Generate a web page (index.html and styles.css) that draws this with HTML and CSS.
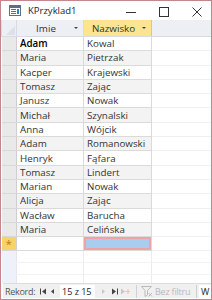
FILE: index.html
```html
<!DOCTYPE html>
<html lang="pl">
<head>
    <meta charset="UTF-8">
    <title>KPrzyklad1</title>
    <link rel="stylesheet" href="styles.css">
</head>
<body>
    <div class="window">
        <div class="title-bar">
            <svg class="app-icon" width="12" height="11" viewBox="0 0 12 11">
                <rect x="0.5" y="0.5" width="11" height="10" fill="#fff" stroke="#5a6f8a"/>
                <rect x="1" y="1" width="10" height="2" fill="#5a6f8a"/>
                <rect x="2" y="4" width="5" height="1" fill="#5a6f8a"/>
                <rect x="2" y="6" width="5" height="1" fill="#5a6f8a"/>
                <rect x="2" y="8" width="5" height="1" fill="#5a6f8a"/>
                <rect x="8" y="4" width="2" height="5" fill="#2f7fd0"/>
            </svg>
            <span class="title">KPrzyklad1</span>
            <div class="win-buttons">
                <span class="win-btn">
                    <svg width="10" height="10" viewBox="0 0 10 10"><line x1="0" y1="5.5" x2="10" y2="5.5" stroke="#333"/></svg>
                </span>
                <span class="win-btn">
                    <svg width="10" height="10" viewBox="0 0 10 10"><rect x="0.5" y="0.5" width="9" height="9" fill="none" stroke="#333"/></svg>
                </span>
                <span class="win-btn">
                    <svg width="10" height="10" viewBox="0 0 10 10"><path d="M0.5 0.5 L9.5 9.5 M9.5 0.5 L0.5 9.5" stroke="#333"/></svg>
                </span>
            </div>
        </div>

        <div class="sheet">
            <table class="grid">
                <colgroup>
                    <col class="c-sel">
                    <col class="c-imie">
                    <col class="c-nazw">
                    <col>
                </colgroup>
                <thead>
                    <tr>
                        <th class="corner">
                            <svg width="9" height="9" viewBox="0 0 9 9"><path d="M9 0 L9 9 L0 9 Z" fill="#dde0e8"/></svg>
                        </th>
                        <th><span>Imie</span><i class="drop"></i></th>
                        <th class="active"><span>Nazwisko</span><i class="drop"></i></th>
                        <th class="blank"></th>
                    </tr>
                </thead>
                <tbody id="rows"></tbody>
            </table>
        </div>

        <div class="nav-bar">
            <span class="lbl">Rekord:</span>
            <span class="nav-ico first">
                <svg width="7" height="7" viewBox="0 0 7 7"><rect x="0" y="0.5" width="1" height="6" fill="#444"/><path d="M6 0.5 L2 3.5 L6 6.5 Z" fill="#444"/></svg>
            </span>
            <span class="nav-ico">
                <svg width="7" height="7" viewBox="0 0 7 7"><path d="M5 1 L2 3.5 L5 6 Z" fill="#444"/></svg>
            </span>
            <span class="rec-box">15 z 15</span>
            <span class="nav-ico next">
                <svg width="7" height="7" viewBox="0 0 7 7"><path d="M2 1 L5 3.5 L2 6 Z" fill="#c8c8c8"/></svg>
            </span>
            <span class="nav-ico">
                <svg width="7" height="7" viewBox="0 0 7 7"><path d="M1 0.5 L5 3.5 L1 6.5 Z" fill="#444"/><rect x="6" y="0.5" width="1" height="6" fill="#444"/></svg>
            </span>
            <span class="nav-ico wide">
                <svg width="9" height="7" viewBox="0 0 9 7"><path d="M0 0.5 L4 3.5 L0 6.5 Z" fill="#c8c8c8"/><path d="M7 1 L7 6 M4.5 3.5 L9 3.5" stroke="#f2cf7a" stroke-width="1.2"/></svg>
            </span>
            <span class="sep"></span>
            <span class="filter">
                <svg width="12" height="11" viewBox="0 0 12 11"><path d="M0.5 0.5 L10.5 0.5 L6.5 4.5 L6.5 9 L4 10.5 L4 4.5 Z" fill="none" stroke="#bbb"/><path d="M7.5 7 L11 10.5 M11 7 L7.5 10.5" stroke="#bbb"/></svg>
                <span class="filter-txt">Bez filtru</span>
            </span>
            <span class="sep last"></span>
            <span class="search-box">W</span>
        </div>
    </div>

    <script>
// dane tabeli
const people = [
    ['Adam', 'Kowal'],
    ['Maria', 'Pietrzak'],
    ['Kacper', 'Krajewski'],
    ['Tomasz', 'Zając'],
    ['Janusz', 'Nowak'],
    ['Michał', 'Szynalski'],
    ['Anna', 'Wójcik'],
    ['Adam', 'Romanowski'],
    ['Henryk', 'Fąfara'],
    ['Tomasz', 'Lindert'],
    ['Marian', 'Nowak'],
    ['Alicja', 'Zając'],
    ['Wacław', 'Barucha'],
    ['Maria', 'Celińska']
];

const tbody = document.getElementById('rows');
let html = '';
people.forEach((p, i) => {
    const cls = i === 0 ? 'first' : (i % 2 ? 'alt' : '');
    html += '<tr class="' + cls + '"><td class="sel"></td><td>' + p[0] + '</td><td>' + p[1] + '</td><td class="blank"></td></tr>';
});
// nowy rekord
html += '<tr class="new-row"><td class="sel star">*</td><td></td><td class="focus"></td><td class="blank"></td></tr>';
// puste miejsce pod tabelą
for (let i = 0; i < 3; i++) {
    html += '<tr class="empty"><td class="sel"></td><td></td><td></td><td class="blank"></td></tr>';
}
tbody.innerHTML = html;
    </script>
</body>
</html>
```

FILE: styles.css
```css
body {
    margin: 0;
    padding: 0;
    font-family: "Open Sans", "Noto Sans", sans-serif;
    background: #fff;
}
.window {
    width: 212px;
    height: 300px;
    box-sizing: border-box;
    border: 1px solid #c5858b;
    display: flex;
    flex-direction: column;
    overflow: hidden;
}
.title-bar {
    height: 19px;
    display: flex;
    align-items: center;
    padding-left: 8px;
    flex-shrink: 0;
}
.app-icon {
    margin-right: 7px;
}
.title {
    font-size: 9.5px;
    color: #222;
}
.win-buttons {
    margin-left: auto;
    display: flex;
    margin-top: 2px;
    margin-right: -2px;
}
.win-btn {
    width: 33px;
    display: flex;
    justify-content: center;
}

/* arkusz danych */
.sheet {
    flex: 1;
    overflow: hidden;
}
.grid {
    border-collapse: collapse;
    table-layout: fixed;
    width: 210px;
    font-size: 9.8px;
    color: #333;
}
.c-sel { width: 15px; }
.c-imie { width: 67px; }
.c-nazw { width: 68px; }
.grid th {
    height: 16px;
    padding: 0;
    background: #edeff5;
    border: 1px solid #d8dbe3;
    border-top: none;
    font-weight: normal;
    color: #333;
    position: relative;
    font-size: 9.8px;
}
.grid th span {
    display: block;
    text-align: center;
    padding-right: 8px;
}
.grid th.active {
    background: #fce490;
    border-right-color: #e8c95c;
}
.grid th.corner {
    text-align: right;
    vertical-align: bottom;
    line-height: 0;
}
.grid th.corner svg {
    margin: 0 1px 1px 0;
}
.grid th.blank {
    border-right: none;
}
.drop {
    position: absolute;
    right: 5px;
    top: 7px;
    width: 0;
    height: 0;
    border-left: 2px solid transparent;
    border-right: 2px solid transparent;
    border-top: 2px solid #444;
}
.grid td {
    height: 13.3px;
    padding: 0 0 0 3px;
    border: 1px solid #dadada;
    border-left: none;
    white-space: nowrap;
    overflow: hidden;
    line-height: 13px;
    color: #333;
}
.grid tr.first td {
    color: #000;
    font-weight: 600;
}
.grid tr.first td:nth-child(3) {
    font-weight: normal;
    color: #333;
}
.grid tr.alt td {
    background: #f3f3f3;
}
.grid td.blank {
    background: #fff !important;
    border-right: none;
    border-bottom-color: #f0f0f0;
}
.grid td.sel {
    background: #e9e9e9 !important;
    border-right: 1px solid #cfcfcf;
    border-bottom-color: #d8d8d8;
    padding: 0;
}
.grid tr.new-row td.star {
    background: #f7d36c !important;
    color: #c47a0a;
    text-align: center;
    font-size: 11px;
}
.grid td.focus {
    background: #a9cdef;
    box-shadow: inset 0 0 0 2px #f0a3a6;
}
.grid tr.empty td {
    border-bottom-color: #f2f2f2;
    border-right-color: #ececec;
    height: 11px;
}
.grid tr.empty td.sel {
    background: #eef1f9 !important;
    border-right-color: #e3e6ee;
    border-bottom-color: #eef1f9;
}

/* pasek nawigacji */
.nav-bar {
    height: 14px;
    flex-shrink: 0;
    margin: 0 0 1px 2px;
    background: #f0f0f0;
    border-top: 1px solid #dcdcdc;
    display: flex;
    align-items: center;
    font-size: 9px;
    color: #555;
    white-space: nowrap;
}
.nav-bar > span {
    flex-shrink: 0;
    box-sizing: border-box;
}
.lbl {
    width: 36px;
    padding-left: 2px;
    letter-spacing: -0.3px;
}
.nav-ico {
    width: 10px;
    display: flex;
    justify-content: center;
}
.nav-ico.first {
    width: 8px;
}
.nav-ico.next {
    width: 12px;
}
.nav-ico.wide {
    width: 13px;
}
.rec-box {
    background: #fff;
    height: 13px;
    width: 35px;
    margin: 0 2px 0 3px;
    padding-left: 2px;
    color: #222;
    line-height: 13px;
}
.sep {
    width: 1px;
    height: 13px;
    background: #d0d0d0;
    margin: 0 4px;
}
.sep.last {
    margin: 0 2px 0 4px;
}
.filter {
    display: flex;
    align-items: center;
    gap: 2px;
    color: #b8b8b8;
}
.filter-txt {
    width: 37px;
    letter-spacing: -0.2px;
}
.search-box {
    background: #fff;
    height: 13px;
    flex: 1;
    flex-shrink: 1 !important;
    padding-left: 2px;
    color: #222;
    line-height: 13px;
}
```
